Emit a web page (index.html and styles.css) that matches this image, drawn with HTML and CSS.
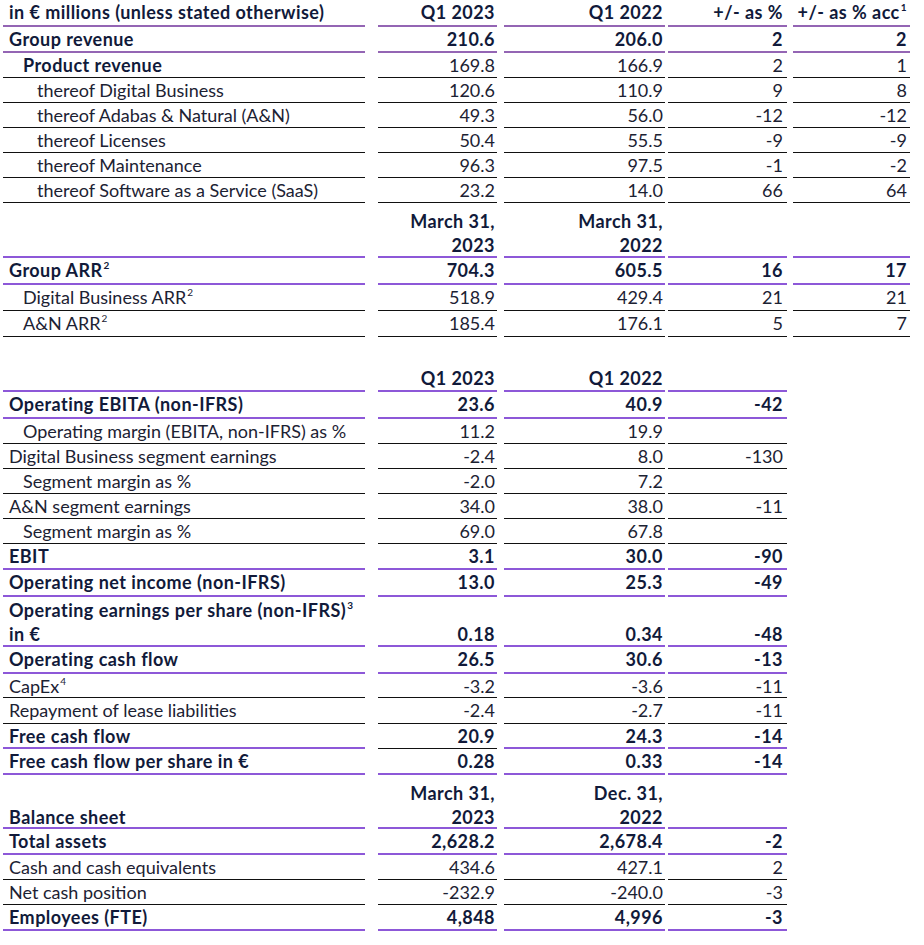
FILE: index.html
```html
<!DOCTYPE html>
<html lang="en">
<head>
<meta charset="utf-8">
<title>Key figures</title>
<link rel="stylesheet" href="styles.css">
</head>
<body>
<div class="sheet">
  <div class="tbl">
    <div class="row b pm">
      <div class="lab">in € millions (unless stated otherwise)</div>
      <div class="v1">Q1 2023</div><div class="v2">Q1 2022</div><div class="v3">+/- as %</div><div class="v4">+/- as % acc<sup>1</sup></div>
    </div>
    <div class="row b pm">
      <div class="lab">Group revenue</div>
      <div class="v1">210.6</div><div class="v2">206.0</div><div class="v3">2</div><div class="v4">2</div>
    </div>
    <div class="row b k">
      <div class="lab i1">Product revenue</div>
      <div class="v1 r">169.8</div><div class="v2 r">166.9</div><div class="v3 r">2</div><div class="v4 r">1</div>
    </div>
    <div class="row k">
      <div class="lab i2">thereof Digital Business</div>
      <div class="v1">120.6</div><div class="v2">110.9</div><div class="v3">9</div><div class="v4">8</div>
    </div>
    <div class="row k">
      <div class="lab i2">thereof Adabas &amp; Natural (A&amp;N)</div>
      <div class="v1">49.3</div><div class="v2">56.0</div><div class="v3">-12</div><div class="v4">-12</div>
    </div>
    <div class="row k">
      <div class="lab i2">thereof Licenses</div>
      <div class="v1">50.4</div><div class="v2">55.5</div><div class="v3">-9</div><div class="v4">-9</div>
    </div>
    <div class="row k">
      <div class="lab i2">thereof Maintenance</div>
      <div class="v1">96.3</div><div class="v2">97.5</div><div class="v3">-1</div><div class="v4">-2</div>
    </div>
    <div class="row k">
      <div class="lab i2">thereof Software as a Service (SaaS)</div>
      <div class="v1">23.2</div><div class="v2">14.0</div><div class="v3">66</div><div class="v4">64</div>
    </div>
    <div class="row b pv tall ta">
      <div class="lab"></div>
      <div class="v1">March 31,<br>2023</div><div class="v2">March 31,<br>2022</div><div class="v3"></div><div class="v4"></div>
    </div>
    <div class="row b pv">
      <div class="lab">Group ARR<sup>2</sup></div>
      <div class="v1">704.3</div><div class="v2">605.5</div><div class="v3">16</div><div class="v4">17</div>
    </div>
    <div class="row k h26">
      <div class="lab i1">Digital Business ARR<sup>2</sup></div>
      <div class="v1">518.9</div><div class="v2">429.4</div><div class="v3">21</div><div class="v4">21</div>
    </div>
    <div class="row k h26">
      <div class="lab i1">A&amp;N ARR<sup>2</sup></div>
      <div class="v1">185.4</div><div class="v2">176.1</div><div class="v3">5</div><div class="v4">7</div>
    </div>
  </div>

  <div class="tbl second">
    <div class="row b pv">
      <div class="lab"></div>
      <div class="v1">Q1 2023</div><div class="v2">Q1 2022</div><div class="v3"></div>
    </div>
    <div class="row b pv">
      <div class="lab">Operating EBITA (non-IFRS)</div>
      <div class="v1">23.6</div><div class="v2">40.9</div><div class="v3">-42</div>
    </div>
    <div class="row k">
      <div class="lab i1">Operating margin (EBITA, non-IFRS) as %</div>
      <div class="v1">11.2</div><div class="v2">19.9</div><div class="v3"></div>
    </div>
    <div class="row k">
      <div class="lab">Digital Business segment earnings</div>
      <div class="v1">-2.4</div><div class="v2">8.0</div><div class="v3">-130</div>
    </div>
    <div class="row k">
      <div class="lab i1">Segment margin as %</div>
      <div class="v1">-2.0</div><div class="v2">7.2</div><div class="v3"></div>
    </div>
    <div class="row k">
      <div class="lab">A&amp;N segment earnings</div>
      <div class="v1">34.0</div><div class="v2">38.0</div><div class="v3">-11</div>
    </div>
    <div class="row k">
      <div class="lab i1">Segment margin as %</div>
      <div class="v1">69.0</div><div class="v2">67.8</div><div class="v3"></div>
    </div>
    <div class="row b pv">
      <div class="lab">EBIT</div>
      <div class="v1">3.1</div><div class="v2">30.0</div><div class="v3">-90</div>
    </div>
    <div class="row b pv">
      <div class="lab">Operating net income (non-IFRS)</div>
      <div class="v1">13.0</div><div class="v2">25.3</div><div class="v3">-49</div>
    </div>
    <div class="row b pv tall te">
      <div class="lab">Operating earnings per share (non-IFRS)<sup>3</sup><br>in €</div>
      <div class="v1 bot">0.18</div><div class="v2 bot">0.34</div><div class="v3 bot">-48</div>
    </div>
    <div class="row b pv">
      <div class="lab">Operating cash flow</div>
      <div class="v1">26.5</div><div class="v2">30.6</div><div class="v3">-13</div>
    </div>
    <div class="row k h24">
      <div class="lab">CapEx<sup>4</sup></div>
      <div class="v1">-3.2</div><div class="v2">-3.6</div><div class="v3">-11</div>
    </div>
    <div class="row k h26">
      <div class="lab">Repayment of lease liabilities</div>
      <div class="v1">-2.4</div><div class="v2">-2.7</div><div class="v3">-11</div>
    </div>
    <div class="row b pv h25">
      <div class="lab">Free cash flow</div>
      <div class="v1 thin">20.9</div><div class="v2">24.3</div><div class="v3">-14</div>
    </div>
    <div class="row b pv h26">
      <div class="lab">Free cash flow per share in €</div>
      <div class="v1">0.28</div><div class="v2">0.33</div><div class="v3">-14</div>
    </div>
    <div class="row b pv tall tb">
      <div class="lab bot">Balance sheet</div>
      <div class="v1">March 31,<br>2023</div><div class="v2">Dec. 31,<br>2022</div><div class="v3"></div>
    </div>
    <div class="row b pv h26">
      <div class="lab">Total assets</div>
      <div class="v1">2,628.2</div><div class="v2">2,678.4</div><div class="v3">-2</div>
    </div>
    <div class="row k h245">
      <div class="lab">Cash and cash equivalents</div>
      <div class="v1">434.6</div><div class="v2">427.1</div><div class="v3">2</div>
    </div>
    <div class="row k">
      <div class="lab">Net cash position</div>
      <div class="v1">-232.9</div><div class="v2">-240.0</div><div class="v3">-3</div>
    </div>
    <div class="row b pv">
      <div class="lab">Employees (FTE)</div>
      <div class="v1">4,848</div><div class="v2">4,996</div><div class="v3">-3</div>
    </div>
  </div>
</div>
</body>
</html>
```

FILE: styles.css
```css
html, body {
  margin: 0;
  padding: 0;
  background: #ffffff;
}

.sheet {
  padding: 0 0 0 3px;
  font-family: "Lato", "Liberation Sans", sans-serif;
  font-size: 18px;
  color: #1c2233;
}

.tbl {
  display: flex;
  flex-direction: column;
}

.second {
  margin-top: 29px;
}

.row {
  display: flex;
  height: 25px;
  line-height: 24px;
}

.row > div {
  box-sizing: border-box;
  height: 100%;
  white-space: nowrap;
}

.lab {
  width: 362px;
  padding-left: 6px;
  text-align: left;
}

.v1, .v2, .v3, .v4 {
  text-align: right;
  padding-right: 2px;
}

.v1 { width: 119px; margin-left: 13px; }
.v2 { width: 161px; margin-left: 7px; }
.v3 { width: 119px; margin-left: 3px; padding-right: 4px; }
.v4 { width: 117px; margin-left: 6px; padding-right: 3px; }

.i1 { padding-left: 20px; }
.i2 { padding-left: 34px; }

.row.b {
  font-weight: 700;
  color: #111a3a;
  letter-spacing: 0.45px;
  height: 26.5px;
}

.row.k > div {
  border-bottom: 1px solid #111111;
}

.row.pm > div {
  border-bottom: 2px solid #9465b4;
}

.row.pv > div {
  border-bottom: 2px solid #8d58d8;
}

.row.b.k {
  height: 25px;
}

.row.h24 { height: 24px; }
.row.h245 { height: 24.5px; }
.row.h25 { height: 25px; }
.row.h26 { height: 26px; }

.row.pv > div.thin {
  border-bottom: 1px solid #111111;
}

.row.tall > div {
  padding-top: var(--pt);
}

.row.tall > div.bot {
  padding-top: calc(var(--pt) + 24px);
}

.row.ta {
  height: 55px;
  --pt: 6px;
}

.row.te {
  height: 50.5px;
  --pt: 1px;
}

.row.tb {
  height: 54.5px;
  --pt: 6px;
}

.row .r {
  font-weight: 400;
  letter-spacing: 0;
  color: #1c2233;
}

sup {
  font-size: 10px;
  line-height: 0;
  vertical-align: 0;
  position: relative;
  top: -8px;
  margin-left: 1px;
}
```
